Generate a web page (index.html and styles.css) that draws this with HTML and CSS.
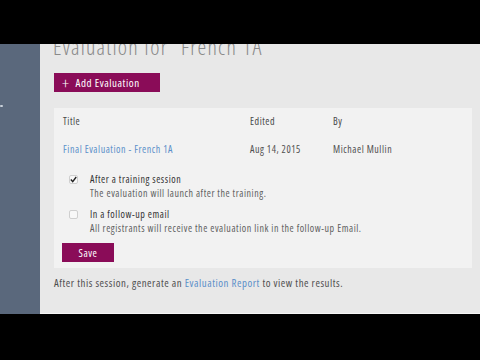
FILE: index.html
```html
<!DOCTYPE html>
<html lang="en">
<head>
    <meta charset="UTF-8">
    <meta name="viewport" content="width=device-width, initial-scale=1.0">
    <title>Evaluation for "French 1A"</title>
    <link rel="stylesheet" href="styles.css">
</head>
<body>

    <div class="screen">
        <aside class="sidebar">
            <span class="dot"></span>
        </aside>

        <main class="content">
            <h1>Evaluation for &ldquo;French 1A&rdquo;</h1>

            <button class="btn btn-add"><span class="plus">+</span>Add Evaluation</button>

            <div class="panel">
                <div class="row head">
                    <span>Title</span>
                    <span>Edited</span>
                    <span>By</span>
                </div>
                <div class="row">
                    <a href="#">Final Evaluation - French 1A</a>
                    <span>Aug 14, 2015</span>
                    <span>Michael Mullin</span>
                </div>

                <div class="option first">
                    <span class="check">
                        <svg width="7" height="7" viewBox="0 0 7 7"><path d="M0.8 3.6 L2.7 5.6 L6.2 1" fill="none" stroke="#222" stroke-width="1.4"/></svg>
                    </span>
                    <div>
                        <div class="opt-title">After a training session</div>
                        <div class="opt-desc">The evaluation will launch after the training.</div>
                    </div>
                </div>
                <div class="option">
                    <span class="check"></span>
                    <div>
                        <div class="opt-title">In a follow-up email</div>
                        <div class="opt-desc">All registrants will receive the evaluation link in the follow-up Email.</div>
                    </div>
                </div>

                <button class="btn btn-save">Save</button>
            </div>

            <p class="note">After this session, generate an <a href="#">Evaluation Report</a> to view the results.</p>
        </main>
    </div>

</body>
</html>
```

FILE: styles.css
```css
body {
    margin: 0;
    width: 480px;
    height: 360px;
    background-color: #000;
    font-family: "Open Sans", Arial, sans-serif;
    font-stretch: 75%;
    font-size: 10px;
    letter-spacing: 0.055em;
    color: #505050;
    overflow: hidden;
}
.screen {
    display: flex;
    margin-top: 44px;
    height: 270px;
    overflow: hidden;
}
.sidebar {
    width: 40px;
    flex-shrink: 0;
    background-color: #5a687c;
}
.dot {
    display: block;
    width: 3px;
    height: 2px;
    margin-top: 61px;
    background-color: #c9d0da;
    border-radius: 1px;
}
.content {
    flex: 1;
    background-color: #e8e8e8;
    padding: 0 8px 0 14px;
    border-bottom: 1px solid #f6f6f6;
}
h1 {
    margin: -9px 0 0 -1px;
    font-size: 22px;
    line-height: 22px;
    font-weight: 300;
    letter-spacing: 0.055em;
    color: #8a8a8a;
    white-space: nowrap;
}
.btn {
    display: block;
    border: none;
    background-color: #8a0c58;
    color: #fff;
    font-family: inherit;
    font-stretch: inherit;
    letter-spacing: inherit;
    cursor: pointer;
    padding: 0;
}
.btn-add {
    display: flex;
    align-items: center;
    margin-top: 16px;
    width: 106px;
    height: 19px;
    padding-left: 8px;
    font-size: 11px;
}
.plus {
    font-size: 17px;
    font-weight: 300;
    line-height: 16px;
    margin-right: 6px;
}
.panel {
    margin-top: 16px;
    background-color: #f2f2f2;
    padding-bottom: 6px;
}
.row {
    display: grid;
    grid-template-columns: 187px 83px 1fr;
    align-items: center;
    padding-left: 9px;
    height: 31px;
}
.row.head {
    height: 25px;
    color: #474747;
}
.row a {
    color: #5b8fc9;
    text-decoration: none;
}
.option {
    display: flex;
    padding-left: 15px;
    margin-top: 7px;
    line-height: 14px;
}
.option.first {
    margin-top: 8px;
}
.check {
    display: flex;
    align-items: center;
    justify-content: center;
    width: 9px;
    height: 9px;
    margin-top: 3px;
    margin-right: 12px;
    flex-shrink: 0;
    border: 1px solid #cfcfcf;
    border-radius: 2px;
    background-color: #f8f8f8;
    box-sizing: border-box;
}
.opt-title {
    color: #333;
}
.opt-desc {
    color: #5f5f5f;
}
.btn-save {
    margin: 8px 0 0 8px;
    width: 52px;
    height: 19px;
    font-size: 10.5px;
}
.note {
    margin: 8px 0 0;
    font-size: 10.8px;
    line-height: 14px;
    color: #4f4f4f;
}
.note a {
    color: #5b8fc9;
    text-decoration: none;
}
```
